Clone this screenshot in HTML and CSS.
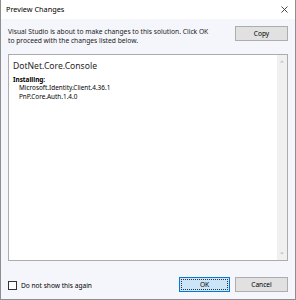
FILE: index.html
```html
<!DOCTYPE html>
<html>
<head>
<meta charset="utf-8">
<link rel="stylesheet" href="styles.css">
</head>
<body>
<div class="window">
  <div class="titlebar">
    <span class="title">Preview Changes</span>
    <svg class="close" width="7" height="7" viewBox="0 0 7 7"><path d="M0.5 0.5L6.5 6.5M6.5 0.5L0.5 6.5" stroke="#333" stroke-width="0.9" fill="none"/></svg>
  </div>
  <div class="body">
    <div class="top">
      <p class="msg">Visual Studio is about to make changes to this solution. Click OK<br>to proceed with the changes listed below.</p>
      <button class="btn copy">Copy</button>
    </div>
    <div class="list">
      <div class="list-content">
        <div class="project">DotNet.Core.Console</div>
        <div class="section">Installing:</div>
        <div class="item">Microsoft.Identity.Client.4.36.1</div>
        <div class="item">PnP.Core.Auth.1.4.0</div>
      </div>
      <div class="scrollbar">
        <svg width="10" height="9" viewBox="0 0 10 9"><path d="M3 5.5L5 3.5L7 5.5Z" fill="#c2c2c2"/></svg>
        <svg width="10" height="9" viewBox="0 0 10 9"><path d="M3 3.5L5 5.5L7 3.5Z" fill="#c2c2c2"/></svg>
      </div>
    </div>
    <div class="footer">
      <label class="check"><span class="box"></span><span class="check-label">Do not show this again</span></label>
      <div class="buttons">
        <button class="btn ok"><span class="focus">OK</span></button>
        <button class="btn cancel">Cancel</button>
      </div>
    </div>
  </div>
</div>
</body>
</html>
```

FILE: styles.css
```css
* { box-sizing: border-box; }
html, body { margin: 0; padding: 0; }
body {
  width: 296px;
  height: 300px;
  font-family: "Noto Sans", "Open Sans", sans-serif;
  color: #000;
  background: #fff;
}
.window {
  width: 296px;
  height: 300px;
  border: 1px solid #8e8e8e;
  border-top: none;
  display: flex;
  flex-direction: column;
  background: #f5f6fb;
}
.titlebar {
  height: 19px;
  background: #fff;
  display: flex;
  align-items: center;
  justify-content: space-between;
  padding: 0 7px 0 5px;
}
.title {
  font-size: 7.3px;
  line-height: 9px;
}
.close { display: block; margin-top: -1px; }
.body {
  flex: 1;
  display: flex;
  flex-direction: column;
  padding: 7px 7px 7px 7px;
}
.top {
  display: flex;
  justify-content: space-between;
  align-items: flex-start;
  height: 18px;
  margin-bottom: 10px;
}
.msg {
  margin: 1px 0 0 0;
  font-size: 6.7px;
  line-height: 9px;
  color: #1a1a1a;
}
.btn {
  font-family: inherit;
  font-size: 6.6px;
  color: #000;
  background: #e1e1e1;
  border: 1px solid #adadad;
  border-radius: 0;
  width: 53px;
  height: 15px;
  padding: 0;
  margin: 0;
  display: flex;
  align-items: center;
  justify-content: center;
}
.list {
  height: 207px;
  background: #fff;
  border: 1px solid #acacac;
  display: flex;
}
.list-content {
  flex: 1;
  padding: 5px 0 0 4px;
}
.project {
  font-size: 8.6px;
  line-height: 12px;
  color: #1e1e1e;
  margin-bottom: 3px;
}
.section {
  font-size: 6.4px;
  font-weight: bold;
  line-height: 9px;
}
.item {
  font-size: 6.4px;
  line-height: 8.5px;
  padding-left: 6px;
}
.scrollbar {
  width: 10px;
  background: #f0f0f0;
  display: flex;
  flex-direction: column;
  justify-content: space-between;
  padding: 2px 0;
}
.scrollbar svg { display: block; }
.footer {
  margin-top: 16px;
  height: 15px;
  display: flex;
  align-items: center;
  justify-content: space-between;
}
.check {
  display: flex;
  align-items: center;
  gap: 4px;
  font-size: 6.6px;
  margin-top: 1px;
}
.box {
  width: 9px;
  height: 9px;
  border: 1px solid #333;
  background: #fff;
}
.buttons {
  display: flex;
  gap: 5px;
}
.ok {
  width: 51px;
  background: #cce4f7;
  border-color: #0078d7;
  padding: 1px;
}
.focus {
  flex: 1;
  align-self: stretch;
  display: flex;
  align-items: center;
  justify-content: center;
  border: 1px dotted #333;
}
.cancel { width: 53px; }
```
